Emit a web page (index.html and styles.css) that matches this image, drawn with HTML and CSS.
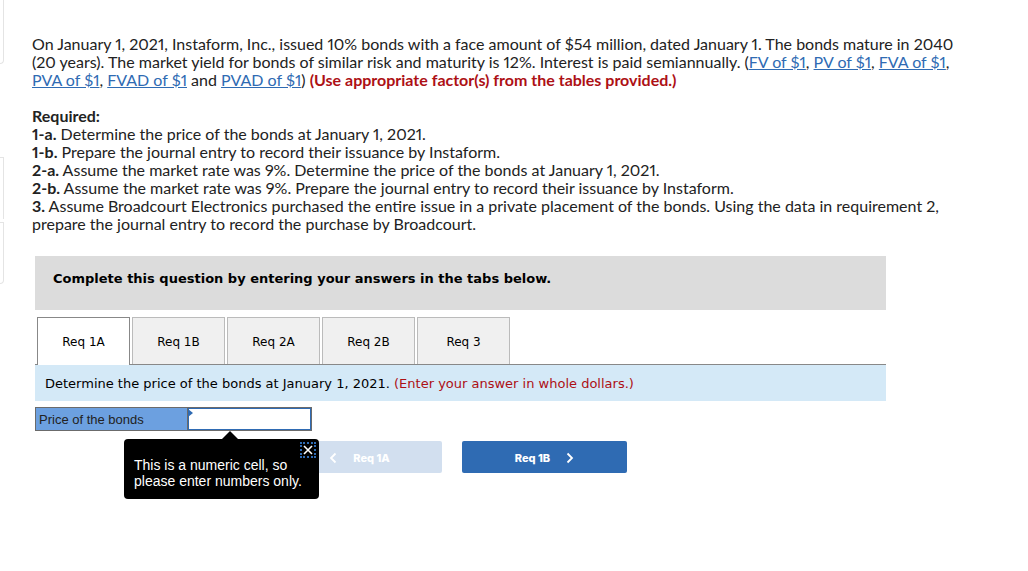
FILE: index.html
```
<!DOCTYPE html>
<html lang="en">
<head>
  <meta charset="UTF-8">
  <title>Bonds - Question</title>
  <meta name="viewport" content="width=device-width, initial-scale=1.0">
  <link rel="stylesheet" href="styles.css">
</head>
<body>
  <aside class="side">
    <div class="side-card first"></div>
    <div class="side-card middle"></div>
    <div class="side-card last"></div>
  </aside>

  <main class="content">
    <div class="question">
      <p>On January 1, 2021, Instaform, Inc., issued 10% bonds with a face amount of $54 million, dated January 1. The bonds mature in 2040 (20 years). The market yield for bonds of similar risk and maturity is 12%. Interest is paid semiannually. (<a href="#">FV of $1</a>, <a href="#">PV of $1</a>, <a href="#">FVA of $1</a>, <a href="#">PVA of $1</a>, <a href="#">FVAD of $1</a> and <a href="#">PVAD of $1</a>) <b class="note">(Use appropriate factor(s) from the tables provided.)</b></p>

      <p>
        <b>Required:</b><br>
        <b>1-a.</b> Determine the price of the bonds at January 1, 2021.<br>
        <b>1-b.</b> Prepare the journal entry to record their issuance by Instaform.<br>
        <b>2-a.</b> Assume the market rate was 9%. Determine the price of the bonds at January 1, 2021.<br>
        <b>2-b.</b> Assume the market rate was 9%. Prepare the journal entry to record their issuance by Instaform.<br>
        <b>3.</b> Assume Broadcourt Electronics purchased the entire issue in a private placement of the bonds. Using the data in requirement 2, prepare the journal entry to record the purchase by Broadcourt.
      </p>
    </div>

    <div class="worksheet">
      <div class="banner">Complete this question by entering your answers in the tabs below.</div>

      <div class="tabs" role="tablist">
        <button type="button" class="tab active" role="tab" aria-selected="true">Req 1A</button>
        <button type="button" class="tab" role="tab" aria-selected="false">Req 1B</button>
        <button type="button" class="tab" role="tab" aria-selected="false">Req 2A</button>
        <button type="button" class="tab" role="tab" aria-selected="false">Req 2B</button>
        <button type="button" class="tab" role="tab" aria-selected="false">Req 3</button>
      </div>

      <div class="instruction">Determine the price of the bonds at January 1, 2021. <span class="note">(Enter your answer in whole dollars.)</span></div>

      <div class="answer">
        <label for="price">Price of the bonds</label>
        <div class="cell">
          <input type="text" id="price">
          <div class="tooltip" role="tooltip">
            <button type="button" class="close" aria-label="Close">
              <svg width="10" height="10" viewBox="0 0 10 10"><path d="M1 1l8 8M9 1l-8 8" stroke="#fff" stroke-width="1.6"/></svg>
            </button>
            This is a numeric cell, so please enter numbers only.
          </div>
        </div>
      </div>

      <div class="pager">
        <button type="button" class="nav prev" disabled>
          <svg width="8" height="12" viewBox="0 0 8 12"><path d="M6.5 1.5L2 6l4.5 4.5" fill="none" stroke="#fff" stroke-width="1.8"/></svg>
          Req 1A
        </button>
        <button type="button" class="nav">
          Req 1B
          <svg width="8" height="12" viewBox="0 0 8 12"><path d="M1.5 1.5L6 6l-4.500 4.500" fill="none" stroke="#fff" stroke-width="1.8"/></svg>
        </button>
      </div>
    </div>
  </main>
</body>
</html>
```

FILE: styles.css
```
body {
  margin: 0;
  display: flex;
  min-height: 100vh;
  background-color: #fff;
  color: #222;
}
button, input {
  margin: 0;
  box-sizing: border-box;
  font: inherit;
}

/* cards cut by the left edge */
.side {
  flex: none;
  width: 4px;
}
.side-card {
  box-sizing: border-box;
  height: 62px;
  border: 1px solid #e4e4e4;
  border-left: 0;
}
.side-card.first {
  height: 64px;
  border-top: 0;
  border-radius: 0 0 4px 0;
}
.side-card.middle {
  margin-top: 93px;
  border-bottom: 0;
}
.side-card.last {
  margin-top: 3px;
  border-radius: 0 0 4px 0;
}

.content {
  flex: 1;
  padding: 35px 64px 0 28px;
}
.question {
  font-family: Lato, sans-serif;
  font-size: 16px;
  font-variant-numeric: proportional-nums;
  line-height: 18px;
}
.question p {
  margin: 0 0 18px;
}
.question a {
  color: #2f6bb3;
}
.note {
  color: #ad1015;
}

.worksheet {
  max-width: 851px;
  margin: 23px 3px 0;
  font-family: Verdana, "DejaVu Sans", sans-serif;
  font-size: 13px;
  color: #000;
}
.banner {
  padding: 15px 18px 23px;
  background-color: #dcdcdc;
  font-weight: bold;
  line-height: 16px;
}
.tabs {
  display: flex;
  gap: 2px;
  margin-top: 7px;
  padding-left: 2px;
  border-bottom: 1px solid #888;
}
.tab {
  width: 93px;
  height: 47px;
  padding: 1px 0 0;
  border: 1px solid #bbb;
  border-bottom: 0;
  background-color: #f0f0f0;
  font-size: 12px;
  color: #000;
}
.tab.active {
  height: 48px;
  margin-bottom: -1px;
  padding: 0;
  border-color: #888;
  background-color: #fff;
}
.instruction {
  padding: 11px 10px 9px;
  background-color: #d4e9f7;
  line-height: 16px;
}

.answer {
  display: flex;
  width: 277px;
  height: 24px;
  box-sizing: border-box;
  margin-top: 6px;
  border: 1px solid #6b6b6b;
  background-color: #6ca0e0;
  font-family: Arial, "Liberation Sans", sans-serif;
}
.answer label {
  width: 152px;
  box-sizing: border-box;
  padding-left: 3px;
  border-right: 1px solid #6b6b6b;
  line-height: 23px;
  color: #222;
}
.cell {
  position: relative;
  flex: 1;
}
.cell input {
  display: block;
  width: 100%;
  height: 22px;
  border: 1px solid #2f6bb3;
  outline: none;
  background-color: #fff;
}
/* marker in the corner of the cell */
.cell::before {
  content: "";
  position: absolute;
  top: 1px;
  left: 0;
  border: 4px solid transparent;
  border-left: 5px solid #2f6bb3;
  border-right: 0;
}
.tooltip {
  position: absolute;
  top: 31px;
  left: -64px;
  z-index: 1;
  width: 195px;
  box-sizing: border-box;
  padding: 18px 10px 10px;
  border-radius: 4px;
  background-color: #000;
  font-size: 14px;
  line-height: 16px;
  color: #fff;
}
.tooltip::before {
  content: "";
  position: absolute;
  bottom: 100%;
  left: 98px;
  border: 8px solid transparent;
  border-top: 0;
  border-bottom-color: #000;
}
.close {
  position: absolute;
  top: 3px;
  right: 3px;
  display: flex;
  align-items: center;
  justify-content: center;
  width: 16px;
  height: 16px;
  padding: 0;
  border: 2px dotted #2f6bb3;
  background: none;
}

.pager {
  display: flex;
  gap: 20px;
  margin: 10px 0 0 242px;
}
.nav {
  display: flex;
  align-items: center;
  justify-content: center;
  gap: 16px;
  width: 165px;
  height: 32px;
  padding: 1px 0 0;
  border: 0;
  border-radius: 2px;
  background-color: #2f6bb3;
  font-family: Inter, sans-serif;
  font-size: 11px;
  font-weight: 800;
  color: #fff;
}
.nav.prev {
  background-color: #d2dfef;
}
```
